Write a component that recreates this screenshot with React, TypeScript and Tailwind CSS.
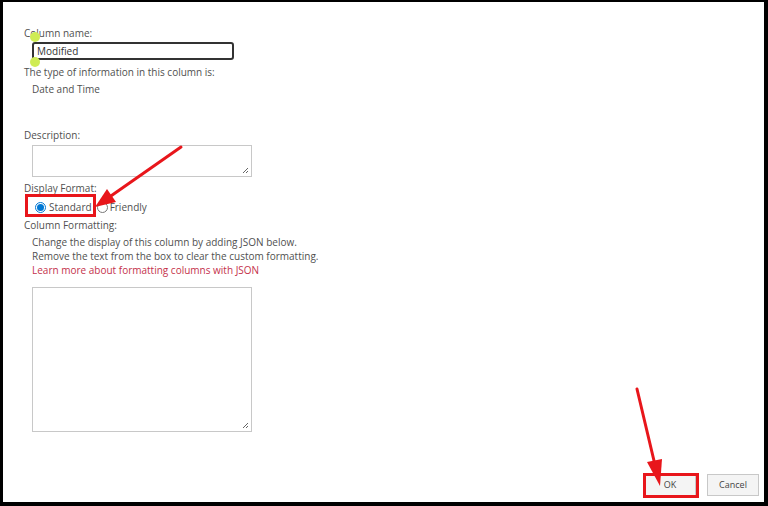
import { ReactNode } from 'react';

const FONT = "font-['Open_Sans','Liberation_Sans',sans-serif]";

function Label({ children, className = '' }: { children: ReactNode; className?: string }) {
  return <div className={`text-[10px] leading-[14px] text-[#505050] ${className}`}>{children}</div>;
}

function Grip() {
  return (
    <svg className="absolute right-[2px] bottom-[2px]" width="7" height="7" viewBox="0 0 7 7">
      <path d="M6 1 L1 6 M6 4 L4 6" stroke="#666" strokeWidth="1" />
    </svg>
  );
}

function Radio({ checked }: { checked?: boolean }) {
  return checked ? (
    <span className="shrink-0 w-[11px] h-[11px] rounded-full border border-[#0078d4] flex items-center justify-center bg-white">
      <span className="block w-[7px] h-[7px] rounded-full bg-[#0078d4]" />
    </span>
  ) : (
    <span className="block shrink-0 w-[11px] h-[11px] rounded-full border border-[#777] bg-white" />
  );
}

export default function App() {
  return (
    <div className={`w-[768px] h-[506px] bg-black pt-[2px] pb-[4px] pl-[3px] pr-[4px] ${FONT}`}>
      <div className="relative w-full h-full bg-white flex flex-col pl-[21px] pt-[24px]">
        <Label>Column name:</Label>
        <div className="mt-[2px] ml-[8px] w-[202px] h-[18px] border-2 border-[#333] rounded-[3px] flex items-center pl-[3px]">
          <span className="text-[10px] text-[#333]">Modified</span>
        </div>
        <Label className="mt-[5px]">The type of information in this column is:</Label>
        <Label className="mt-[3px] ml-[8px]">Date and Time</Label>

        <Label className="mt-[32px]">Description:</Label>
        <div className="relative mt-[3px] ml-[8px] w-[220px] h-[32px] border border-[#c8c8c8]">
          <Grip />
        </div>

        <Label className="mt-[4px]">Display Format:</Label>
        <div className="mt-[5px] ml-[11px] flex items-center h-[14px] text-[10px] text-[#505050]">
          <Radio checked />
          <span className="ml-[3px]">Standard</span>
          <span className="ml-[5px]">
            <Radio />
          </span>
          <span className="ml-[2px]">Friendly</span>
        </div>

        <Label className="mt-[4px]">Column Formatting:</Label>
        <div className="mt-[3px] ml-[8px]">
          <Label>Change the display of this column by adding JSON below.</Label>
          <Label>Remove the text from the box to clear the custom formatting.</Label>
          <div className="text-[10px] leading-[14px] text-[#c4314b]">Learn more about formatting columns with JSON</div>
        </div>
        <div className="relative mt-[10px] ml-[8px] w-[220px] h-[145px] border border-[#c8c8c8]">
          <Grip />
        </div>

        <div className="mt-auto mb-[6px] mr-[5px] flex justify-end gap-[11px]">
          <button className="w-[52px] h-[22px] border border-[#c8c8c8] bg-[#f4f4f4] text-[9px] text-[#444]">OK</button>
          <button className="w-[52px] h-[22px] border border-[#c8c8c8] bg-[#f4f4f4] text-[9px] text-[#444]">Cancel</button>
        </div>

        {/* selection handles */}
        <span className="absolute left-[27px] top-[30px] w-[10px] h-[10px] rounded-full bg-[#cfec55]" />
        <span className="absolute left-[27px] top-[55px] w-[10px] h-[10px] rounded-full bg-[#cfec55]" />

        {/* highlight boxes */}
        <span className="absolute left-[22px] top-[192px] w-[71px] h-[23px] border-[3px] border-[#e8161b]" />
        <span className="absolute left-[640px] top-[471px] w-[56px] h-[25px] border-[3px] border-[#e8161b]" />

        <svg className="absolute left-0 top-0 pointer-events-none" width="761" height="500" viewBox="3 2 761 500">
          <line x1="181" y1="147" x2="108" y2="198" stroke="#e8161b" strokeWidth="3" strokeLinecap="round" />
          <polygon points="95,207 116,202 107,189" fill="#e8161b" />
          <line x1="637" y1="389" x2="655" y2="465" stroke="#e8161b" strokeWidth="3" strokeLinecap="round" />
          <polygon points="660,486 662,459 647,462" fill="#e8161b" />
        </svg>
      </div>
    </div>
  );
}
